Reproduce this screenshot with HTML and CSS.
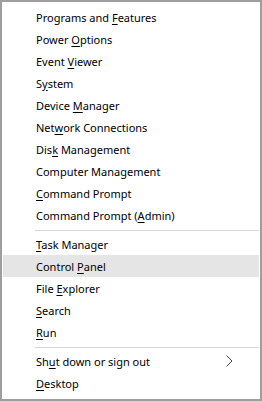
FILE: index.html
```html
<!DOCTYPE html>
<html lang="en">
  <head>
    <meta charset="UTF-8" />
    <meta name="viewport" content="width=device-width, initial-scale=1.0" />
    <title>Quick Link Menu</title>
    <link rel="stylesheet" href="styles.css">
  </head>
  <body>
    <div class="menu">
      <div class="item"><span>Programs and <u>F</u>eatures</span></div>
      <div class="item"><span>Power <u>O</u>ptions</span></div>
      <div class="item"><span>Event <u>V</u>iewer</span></div>
      <div class="item"><span>S<u>y</u>stem</span></div>
      <div class="item"><span>Device <u>M</u>anager</span></div>
      <div class="item"><span>Net<u>w</u>ork Connections</span></div>
      <div class="item"><span>Dis<u>k</u> Management</span></div>
      <div class="item"><span>Computer Mana<u>g</u>ement</span></div>
      <div class="item"><span><u>C</u>ommand Prompt</span></div>
      <div class="item"><span>Command Prompt (<u>A</u>dmin)</span></div>

      <div class="sep"></div>

      <div class="item"><span><u>T</u>ask Manager</span></div>
      <div class="item active"><span>Control <u>P</u>anel</span></div>
      <div class="item"><span>File <u>E</u>xplorer</span></div>
      <div class="item"><span><u>S</u>earch</span></div>
      <div class="item"><span><u>R</u>un</span></div>

      <div class="sep"></div>

      <div class="item">
        <span>Sh<u>u</u>t down or sign out</span>
        <svg class="arrow" width="7" height="12" viewBox="0 0 7 12">
          <path d="M0.5 0.5 L6 6 L0.5 11.5" fill="none" stroke="#333" stroke-width="0.9" />
        </svg>
      </div>
      <div class="item"><span><u>D</u>esktop</span></div>
    </div>
  </body>
</html>
```

FILE: styles.css
```css
body {
  margin: 0;
  padding: 0;
  background: white;
}
.menu {
  width: 262px;
  height: 401px;
  box-sizing: border-box;
  border: 2px solid rgb(158, 158, 158);
  padding: 4px 1px 5px 1px;
  background: white;
  font-family: "Noto Sans", sans-serif;
  font-size: 11px;
  color: rgb(0, 0, 0);
}
.item {
  height: 22px;
  display: flex;
  align-items: center;
  justify-content: space-between;
  padding: 0 26px 0 33px;
  white-space: nowrap;
}
.item u {
  text-underline-offset: 2px;
}
.active {
  background: rgb(229, 229, 229);
}
.sep {
  height: 1px;
  margin: 4px 0 2px 32px;
  background: rgb(215, 215, 215);
}
.arrow {
  display: block;
}
```
